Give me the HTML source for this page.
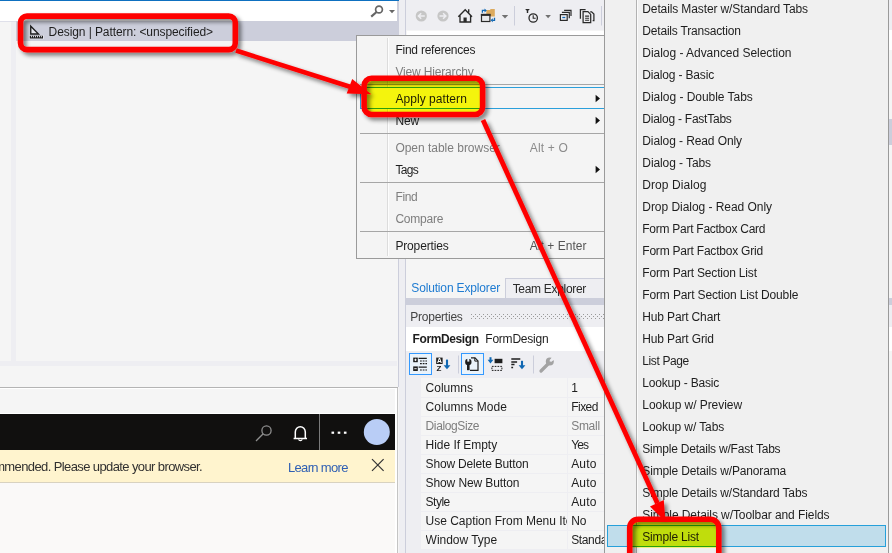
<!DOCTYPE html><html><head><meta charset="utf-8"><title>Apply pattern</title><style>
*{box-sizing:border-box}
html,body{margin:0;padding:0}
body{width:892px;height:553px;overflow:hidden;position:relative;background:#f5f5f5;font-family:"Liberation Sans",sans-serif;font-size:12px;color:#1e1e1e}
div,span,svg{position:absolute}
.t{white-space:pre;line-height:16px;height:16px}
.dis{color:#7e7e7e}
</style></head><body>
<div style="left:0;top:0;width:399px;height:1px;background:#0e70c0"></div>
<div style="left:0;top:1px;width:397px;height:20px;background:#fff"></div>
<div style="left:397px;top:1px;width:2px;height:40px;background:#cccedb"></div>
<div style="left:398px;top:41px;width:1px;height:346px;background:#cccedb"></div>
<div style="left:0;top:21px;width:17px;height:1px;background:#dfe0ea"></div>
<div style="left:16px;top:21px;width:383px;height:20px;background:#cccedb"></div>
<div style="left:11px;top:22px;width:5px;height:339px;background:#eeeef2"></div>
<div style="left:0;top:361px;width:397px;height:5px;background:#eeeef2"></div>
<svg style="left:368px;top:3px" width="30" height="17" viewBox="0 0 30 17"><circle cx="11" cy="6.5" r="3.4" fill="none" stroke="#666" stroke-width="1.7"/><path d="M8.6 9 L3.2 13.6" stroke="#666" stroke-width="2.2" fill="none"/><path d="M21 7 h6 l-3 3.2z" fill="#666"/></svg>
<svg style="left:28px;top:23px" width="17" height="17" viewBox="0 0 17 17"><rect x="1.2" y="12.1" width="14.4" height="4" fill="#e9e9f0"/><path d="M2.75 3.2 V11 H10.5 Z" fill="#e6e6ec" stroke="#1e1e1e" stroke-width="1.35" stroke-linejoin="miter"/><rect x="1.8" y="12.7" width="13.2" height="2.8" fill="#1e1e1e"/><path d="M3.5 12.7v1.6M5.5 12.7v1.6M7.5 12.7v1.6M9.5 12.7v1.6M11.5 12.7v1.6M13.4 12.7v1.6" stroke="#e9e9f0" stroke-width="0.9"/></svg>
<span class="t" style="left:48.6px;top:24px;letter-spacing:-0.091px;">Design | Pattern: &lt;unspecified&gt;</span>
<div style="left:0;top:387px;width:398px;height:1px;background:#b4b4b4"></div>
<div style="left:0;top:388px;width:397px;height:1px;background:#fff"></div>
<div style="left:397px;top:388px;width:1px;height:165px;background:#c4c4c4"></div>
<div style="left:395px;top:389px;width:2px;height:164px;background:#fff"></div>
<div style="left:0;top:413px;width:395px;height:1px;background:#fff"></div>
<div style="left:0;top:414px;width:395px;height:36px;background:#11100f"></div>
<div style="left:0;top:450px;width:395px;height:32px;background:#fff4ce"></div>
<div style="left:0;top:482px;width:395px;height:1px;background:#d8d2c0"></div>
<div style="left:0;top:483px;width:395px;height:70px;background:#faf9f8"></div>
<svg style="left:250px;top:416px" width="145" height="32" viewBox="0 0 145 32"><circle cx="16.5" cy="14.5" r="4.6" fill="none" stroke="#8f8f8f" stroke-width="1.3"/><path d="M13.2 17.8 L6 25" stroke="#8f8f8f" stroke-width="1.3"/><path d="M45.3 22.3 v-6.2 a5 5.4 0 0 1 10 0 v6.2 M43.6 22.6 h13.4" fill="none" stroke="#fff" stroke-width="1.5"/><path d="M48.6 23.4 a1.9 1.9 0 0 0 3.6 0" fill="none" stroke="#fff" stroke-width="1.3"/><rect x="81.5" y="15.6" width="2.6" height="2.2" fill="#fff"/><rect x="87.7" y="15.6" width="2.6" height="2.2" fill="#fff"/><rect x="93.9" y="15.6" width="2.6" height="2.2" fill="#fff"/><circle cx="126.8" cy="16" r="13" fill="#b9cdf6"/></svg>
<div style="left:319px;top:414px;width:1px;height:36px;background:#7a7a7a"></div>
<span class="t" style="left:-5.88px;top:459px;font-size:13px;color:#323130;letter-spacing:-0.607px">mmended. Please update your browser.</span>
<span class="t" style="left:288px;top:460px;font-size:13px;color:#2f5fb3;letter-spacing:-0.668px;">Learn more</span>
<svg style="left:370px;top:457px" width="16" height="16" viewBox="0 0 16 16"><path d="M2 2.2 L13.6 13.8 M13.6 2.2 L2 13.8" stroke="#333" stroke-width="1.2" fill="none"/></svg>
<div style="left:399px;top:0;width:6px;height:553px;background:#eeeef2"></div>
<div style="left:405px;top:0;width:1px;height:553px;background:#cccedb"></div>
<div style="left:406px;top:0;width:198px;height:30px;background:#eeeef2"></div>
<div style="left:406px;top:30px;width:198px;height:249px;background:#f5f5f5"></div>
<div style="left:407px;top:31px;width:197px;height:5px;background:#fff"></div>
<svg style="left:406px;top:0" width="198" height="30" viewBox="0 0 198 30"><circle cx="15.3" cy="16" r="5.6" fill="#c6c6c6"/><path d="M18.8 16 h-6 M15.2 13.2 l-2.8 2.8 2.8 2.8" stroke="#eeeef2" stroke-width="1.5" fill="none"/><circle cx="37" cy="16" r="5.6" fill="#c6c6c6"/><path d="M33.5 16 h6 M37.1 13.2 l2.8 2.8 -2.8 2.8" stroke="#eeeef2" stroke-width="1.5" fill="none"/><path d="M52.3 16.8 L59.2 9.7 L66 16.8 M54 15.4 V22 H64.6 V15.4 M62.7 12.4 V9.2" fill="none" stroke="#2a2a2a" stroke-width="1.35"/><rect x="57.5" y="17.5" width="3.2" height="4.6" fill="#2a2a2a"/><path d="M80.3 10 h3.6 l0.8-1 h4.1 v7.6 h-8.5z" fill="#dcaa5e"/><rect x="75.5" y="14.5" width="8.4" height="7" fill="#e9e9ec" stroke="#2a2a2a" stroke-width="1.2"/><rect x="74.9" y="13.9" width="9.6" height="2" fill="#2a2a2a"/><path d="M76.4 12.8 V10.4 H79" stroke="#1168b3" stroke-width="1.3" fill="none"/><path d="M78.5 8.4 L80.8 10.4 L78.5 12.4z" fill="#1168b3"/><path d="M88.5 17.8 V20.3 H86.4" stroke="#1168b3" stroke-width="1.3" fill="none"/><path d="M86.8 18.3 L84.5 20.3 L86.8 22.3z" fill="#1168b3"/><path d="M95.8 15 h6.4 l-3.2 3.4z" fill="#717171"/><path d="M108.5 6 v19.5" stroke="#cccedb" stroke-width="1"/><circle cx="127.2" cy="18" r="4.2" fill="none" stroke="#2a2a2a" stroke-width="1.3"/><path d="M127.2 15.2 v3 h2.5" fill="none" stroke="#2a2a2a" stroke-width="1.1"/><path d="M119.1 8.9 h4.8 l-1.7 1.9 v2.2 h-1.4 v-2.2z" fill="#2a2a2a"/><path d="M139.3 15 h5.6 l-2.8 3.2z" fill="#717171"/><path d="M158.1 10.3 H165 V16.1 M155.9 12.3 H163.3 V18.2" fill="none" stroke="#2a2a2a" stroke-width="1.2"/><rect x="154.4" y="14.6" width="6.8" height="5.8" fill="#eeeef2" stroke="#2a2a2a" stroke-width="1.2"/><path d="M156.3 17.5 h3" stroke="#1168b3" stroke-width="1.3"/><path d="M174.4 18.7 V9.6 H179.6 M184.2 11.9 H185.6 L187.9 14.1 V20.7 H186.7" fill="none" stroke="#2a2a2a" stroke-width="1.25"/><path d="M177.1 11.6 H181.9 L184.7 14.4 V22.7 H177.1Z" fill="#eeeef2" stroke="#2a2a2a" stroke-width="1.25"/><path d="M179.1 16.1 h4 M179.1 18.2 h4 M179.1 20.2 h4" stroke="#2a2a2a" stroke-width="1.1"/><path d="M195.5 6 v19.5" stroke="#cccedb" stroke-width="1"/></svg>
<div style="left:505px;top:278px;width:99px;height:20px;background:#eeeef2;border-left:1px solid #cccedb;border-top:1px solid #cccedb"></div>
<span class="t" style="left:411.3px;top:280px;color:#1e7bd1;letter-spacing:-0.158px;">Solution Explorer</span>
<span class="t" style="left:512.7px;top:281px;color:#2a2a2a;letter-spacing:-0.313px;">Team Explorer</span>
<div style="left:406px;top:298px;width:198px;height:7px;background:#cccedb"></div>
<div style="left:406px;top:305px;width:198px;height:22px;background:#eeeef2"></div>
<span class="t" style="left:410.3px;top:309px;color:#444;letter-spacing:-0.240px;">Properties</span>
<svg style="left:471px;top:314px" width="133" height="5" viewBox="0 0 133 5" shape-rendering="crispEdges"><defs><pattern id="grip" width="4" height="4" patternUnits="userSpaceOnUse"><rect x="0" y="0" width="1" height="1" fill="#999"/><rect x="2" y="2" width="1" height="1" fill="#999"/></pattern></defs><rect width="133" height="5" fill="url(#grip)"/></svg>
<div style="left:406px;top:327px;width:198px;height:24px;background:#fff"></div>
<span class="t" style="left:412.5px;top:331px;font-weight:700;letter-spacing:-0.392px;">FormDesign</span>
<span class="t" style="left:485.3px;top:331px;letter-spacing:-0.226px;">FormDesign</span>
<div style="left:406px;top:351px;width:198px;height:27px;background:#eeeef2"></div>
<div style="left:409px;top:353px;width:23px;height:22px;background:#eaf3fb;border:1px solid #3399ff"></div>
<div style="left:461px;top:353px;width:23px;height:22px;background:#eaf3fb;border:1px solid #3399ff"></div>
<svg style="left:406px;top:351px" width="198" height="27" viewBox="0 0 198 27"><rect x="7.2" y="6.6" width="4.6" height="4.6" fill="#1e1e1e"/><path d="M8.3 8.9h2.4M9.5 7.7v2.4" stroke="#fff" stroke-width="0.9"/><rect x="7.2" y="15.4" width="4.6" height="4.6" fill="#1e1e1e"/><path d="M8.3 17.7h2.4" stroke="#fff" stroke-width="0.9"/><path d="M12.6 7.4h8.2M12.6 16.2h8.2" stroke="#1e1e1e" stroke-width="1.3"/><path d="M14 10h7M14 12.6h7M14 19h7" stroke="#1e1e1e" stroke-width="1.2" stroke-dasharray="1.8 0.9"/><rect x="30.2" y="6.6" width="6.4" height="6.4" fill="#1e1e1e"/><text x="31.1" y="12.3" font-family="Liberation Sans,sans-serif" font-size="6.8" font-weight="700" fill="#fff">A</text><text x="30.6" y="20.2" font-family="Liberation Sans,sans-serif" font-size="8" font-weight="700" fill="#1e1e1e">Z</text><path d="M41 8.6v8.2" stroke="#1168b3" stroke-width="2.1" fill="none"/><path d="M37.6 14.2h6.8l-3.4 4z" fill="#1168b3"/><path d="M52.5 4.5v18" stroke="#cccedb"/><path d="M65 6.9 h4 l3 3 v9.4 h-8" fill="none" stroke="#1e1e1e" stroke-width="1.2"/><path d="M68.8 6.9 v3.2 h3.2" fill="none" stroke="#1e1e1e" stroke-width="1"/><circle cx="62.3" cy="10.9" r="3.2" fill="#1e1e1e"/><rect x="61.3" y="7" width="2" height="3.6" fill="#eaf3fb"/><rect x="61" y="12" width="2.6" height="7.2" fill="#1e1e1e"/><path d="M84.5 6.2v4" stroke="#1168b3" stroke-width="2" fill="none"/><path d="M81.6 8.8h5.8l-2.9 3.6z" fill="#1168b3"/><rect x="88.6" y="7.8" width="7.8" height="4.4" fill="#1e1e1e"/><rect x="85.9" y="15.4" width="10" height="4" fill="none" stroke="#1e1e1e" stroke-width="1" stroke-dasharray="1.7 1.1"/><path d="M105.3 8.1h9M105.3 11h5.8M105.3 13.6h3.2M105.3 16.4h1.8" stroke="#1e1e1e" stroke-width="1.5"/><path d="M116 9.8v7" stroke="#1168b3" stroke-width="2.1" fill="none"/><path d="M112.6 14.2h6.8l-3.4 4z" fill="#1168b3"/><path d="M127.5 4.5v18" stroke="#cccedb"/><path d="M135 20 L142 13" stroke="#a3a3a3" stroke-width="3.2" stroke-linecap="round" fill="none"/><circle cx="143.8" cy="10.6" r="4" fill="#a3a3a3"/><path d="M143.6 10.8 L146.2 5.6 L149.4 8.6 Z" fill="#eeeef2"/><path d="M144.3 10.1 L147.6 6.8" stroke="#eeeef2" stroke-width="2.4"/></svg>
<div style="left:406px;top:378px;width:198px;height:175px;background:#eeeef2"></div>
<div style="left:421px;top:378px;width:183px;height:171px;background:#f5f5f5"></div>
<div style="left:567px;top:378px;width:1px;height:171px;background:#eeeef2"></div>
<div style="left:421px;top:397px;width:183px;height:1px;background:#eeeef2"></div>
<span class="t" style="left:425.6px;top:380px;letter-spacing:0.006px;width:141.4px;overflow:hidden;">Columns</span>
<span class="t" style="left:571.2px;top:380px;letter-spacing:-1.388px;width:32.8px;overflow:hidden;">1</span>
<div style="left:421px;top:416px;width:183px;height:1px;background:#eeeef2"></div>
<span class="t" style="left:425.6px;top:399px;letter-spacing:0.058px;width:141.4px;overflow:hidden;">Columns Mode</span>
<span class="t" style="left:571.2px;top:399px;letter-spacing:-0.529px;width:32.8px;overflow:hidden;">Fixed</span>
<div style="left:421px;top:435px;width:183px;height:1px;background:#eeeef2"></div>
<span class="t dis" style="left:425.6px;top:418px;letter-spacing:-0.388px;width:141.4px;overflow:hidden;">DialogSize</span>
<span class="t dis" style="left:571.2px;top:418px;letter-spacing:-0.283px;width:32.8px;overflow:hidden;">Small</span>
<div style="left:421px;top:454px;width:183px;height:1px;background:#eeeef2"></div>
<span class="t" style="left:425.6px;top:437px;letter-spacing:-0.041px;width:141.4px;overflow:hidden;">Hide If Empty</span>
<span class="t" style="left:571.2px;top:437px;letter-spacing:-0.926px;width:32.8px;overflow:hidden;">Yes</span>
<div style="left:421px;top:473px;width:183px;height:1px;background:#eeeef2"></div>
<span class="t" style="left:425.6px;top:456px;letter-spacing:-0.182px;width:141.4px;overflow:hidden;">Show Delete Button</span>
<span class="t" style="left:571.2px;top:456px;letter-spacing:0.153px;width:32.8px;overflow:hidden;">Auto</span>
<div style="left:421px;top:492px;width:183px;height:1px;background:#eeeef2"></div>
<span class="t" style="left:425.6px;top:475px;letter-spacing:-0.113px;width:141.4px;overflow:hidden;">Show New Button</span>
<span class="t" style="left:571.2px;top:475px;letter-spacing:0.153px;width:32.8px;overflow:hidden;">Auto</span>
<div style="left:421px;top:511px;width:183px;height:1px;background:#eeeef2"></div>
<span class="t" style="left:425.6px;top:494px;letter-spacing:-0.498px;width:141.4px;overflow:hidden;">Style</span>
<span class="t" style="left:571.2px;top:494px;letter-spacing:0.153px;width:32.8px;overflow:hidden;">Auto</span>
<div style="left:421px;top:530px;width:183px;height:1px;background:#eeeef2"></div>
<span class="t" style="left:425.6px;top:513px;letter-spacing:-0.019px;width:141.4px;overflow:hidden;">Use Caption From Menu Item</span>
<span class="t" style="left:571.2px;top:513px;letter-spacing:-0.022px;width:32.8px;overflow:hidden;">No</span>
<div style="left:421px;top:549px;width:183px;height:1px;background:#eeeef2"></div>
<span class="t" style="left:425.6px;top:532px;letter-spacing:-0.028px;width:141.4px;overflow:hidden;">Window Type</span>
<span class="t" style="left:571.2px;top:532px;letter-spacing:-0.363px;width:32.8px;overflow:hidden;">Standard</span>
<div style="left:604px;top:0;width:288px;height:553px;background:#eeeef2"></div>
<div style="left:889px;top:0;width:3px;height:553px;background:#f5f5f5"></div>
<div style="left:889px;top:0;width:3px;height:30px;background:#eeeef2"></div>
<div style="left:889px;top:30px;width:3px;height:20px;background:#fff"></div>
<div style="left:889px;top:119px;width:3px;height:26px;background:#cccedb"></div>
<div style="left:889px;top:298px;width:3px;height:7px;background:#cccedb"></div>
<div style="left:889px;top:305px;width:3px;height:22px;background:#eeeef2"></div>
<div style="left:889px;top:327px;width:3px;height:24px;background:#fff"></div>
<div style="left:356px;top:35px;width:249px;height:224px;background:#f4f4f4;border:1px solid #9a9a9a"></div>
<div style="left:387px;top:38px;width:1px;height:218px;background:#dcdcdc"></div>
<div style="left:388px;top:38px;width:1px;height:218px;background:#fdfdfd"></div>
<div style="left:360px;top:84px;width:244px;height:1px;background:#a6a6a6"></div>
<div style="left:360px;top:133px;width:244px;height:1px;background:#a6a6a6"></div>
<div style="left:360px;top:182px;width:244px;height:1px;background:#a6a6a6"></div>
<div style="left:360px;top:231px;width:244px;height:1px;background:#a6a6a6"></div>
<div style="left:360px;top:87px;width:244px;height:22px;background:#f4f4f4;border-top:1px solid #2b9fdb;border-bottom:1px solid #2b9fdb;border-left:1px solid #2b9fdb"></div>
<span class="t" style="left:395.4px;top:42px;letter-spacing:-0.232px;">Find references</span>
<span class="t dis" style="left:395.4px;top:64px;letter-spacing:-0.163px;">View Hierarchy</span>
<span class="t" style="left:395.4px;top:91px;letter-spacing:0.060px;">Apply pattern</span>
<svg style="left:595px;top:94px" width="6" height="9" viewBox="0 0 6 9"><path d="M0.6 0.8 L5 4.5 L0.6 8.2z" fill="#111"/></svg>
<span class="t" style="left:395.4px;top:113px;letter-spacing:-0.139px;">New</span>
<svg style="left:595px;top:116px" width="6" height="9" viewBox="0 0 6 9"><path d="M0.6 0.8 L5 4.5 L0.6 8.2z" fill="#111"/></svg>
<span class="t dis" style="left:395.4px;top:140px;letter-spacing:-0.019px;">Open table browser</span>
<span class="t" style="left:529.8px;top:140px;color:#8c8c8c;letter-spacing:0.169px;">Alt + O</span>
<span class="t" style="left:395.4px;top:162px;letter-spacing:-0.690px;">Tags</span>
<svg style="left:595px;top:165px" width="6" height="9" viewBox="0 0 6 9"><path d="M0.6 0.8 L5 4.5 L0.6 8.2z" fill="#111"/></svg>
<span class="t dis" style="left:395.4px;top:189px;letter-spacing:-0.336px;">Find</span>
<span class="t dis" style="left:395.4px;top:211px;letter-spacing:-0.208px;">Compare</span>
<span class="t" style="left:395.4px;top:238px;letter-spacing:-0.150px;">Properties</span>
<span class="t" style="left:529.8px;top:238px;color:#555;letter-spacing:0.030px;">Alt + Enter</span>
<div style="left:604px;top:-2px;width:285px;height:560px;background:#f0f0f0;border:1px solid #9a9a9a"></div>
<div style="left:636px;top:0;width:1px;height:553px;background:#b2b2b2"></div>
<div style="left:637px;top:0;width:1px;height:553px;background:#fbfbfb"></div>
<div style="left:607px;top:525px;width:279px;height:22px;background:#c0ddeb;border:1px solid #26a0da"></div>
<span class="t" style="left:642.3px;top:1px;letter-spacing:-0.117px;">Details Master w/Standard Tabs</span>
<span class="t" style="left:642.3px;top:23px;letter-spacing:-0.192px;">Details Transaction</span>
<span class="t" style="left:642.3px;top:45px;letter-spacing:-0.033px;">Dialog - Advanced Selection</span>
<span class="t" style="left:642.3px;top:67px;letter-spacing:-0.167px;">Dialog - Basic</span>
<span class="t" style="left:642.3px;top:89px;letter-spacing:-0.034px;">Dialog - Double Tabs</span>
<span class="t" style="left:642.3px;top:111px;letter-spacing:-0.240px;">Dialog - FastTabs</span>
<span class="t" style="left:642.3px;top:133px;letter-spacing:-0.094px;">Dialog - Read Only</span>
<span class="t" style="left:642.3px;top:155px;letter-spacing:-0.087px;">Dialog - Tabs</span>
<span class="t" style="left:642.3px;top:177px;letter-spacing:0.066px;">Drop Dialog</span>
<span class="t" style="left:642.3px;top:199px;letter-spacing:-0.045px;">Drop Dialog - Read Only</span>
<span class="t" style="left:642.3px;top:221px;letter-spacing:-0.264px;">Form Part Factbox Card</span>
<span class="t" style="left:642.3px;top:243px;letter-spacing:-0.217px;">Form Part Factbox Grid</span>
<span class="t" style="left:642.3px;top:265px;letter-spacing:-0.192px;">Form Part Section List</span>
<span class="t" style="left:642.3px;top:287px;letter-spacing:-0.144px;">Form Part Section List Double</span>
<span class="t" style="left:642.3px;top:309px;letter-spacing:-0.153px;">Hub Part Chart</span>
<span class="t" style="left:642.3px;top:331px;letter-spacing:-0.143px;">Hub Part Grid</span>
<span class="t" style="left:642.3px;top:353px;letter-spacing:-0.383px;">List Page</span>
<span class="t" style="left:642.3px;top:375px;letter-spacing:-0.185px;">Lookup - Basic</span>
<span class="t" style="left:642.3px;top:397px;letter-spacing:-0.060px;">Lookup w/ Preview</span>
<span class="t" style="left:642.3px;top:419px;letter-spacing:-0.091px;">Lookup w/ Tabs</span>
<span class="t" style="left:642.3px;top:441px;letter-spacing:-0.221px;">Simple Details w/Fast Tabs</span>
<span class="t" style="left:642.3px;top:463px;letter-spacing:-0.144px;">Simple Details w/Panorama</span>
<span class="t" style="left:642.3px;top:485px;letter-spacing:-0.140px;">Simple Details w/Standard Tabs</span>
<span class="t" style="left:642.3px;top:507px;letter-spacing:-0.083px;">Simple Details w/Toolbar and Fields</span>
<span class="t" style="left:642.3px;top:529px;letter-spacing:-0.181px;">Simple List</span>
<svg style="left:0;top:0" width="892" height="553" viewBox="0 0 892 553"><defs><filter id="sh" x="-10%" y="-10%" width="130%" height="130%"><feGaussianBlur in="SourceAlpha" stdDeviation="2.1"/><feOffset dx="3" dy="3"/><feComponentTransfer><feFuncA type="linear" slope="0.5"/></feComponentTransfer><feMerge><feMergeNode/><feMergeNode in="SourceGraphic"/></feMerge></filter></defs><rect x="366" y="80" width="115" height="33" fill="#ffff00" fill-opacity="0.95" style="mix-blend-mode:multiply"/><rect x="632" y="522" width="85" height="25.5" fill="#ffff00" fill-opacity="0.95" style="mix-blend-mode:multiply"/><g filter="url(#sh)" fill="none" stroke="#fe0000" stroke-width="5.6"><rect x="20.5" y="16.1" width="214.8" height="33.5" rx="6.5"/><rect x="364.1" y="78.3" width="118.5" height="36.2" rx="7.5"/><rect x="629.7" y="519.3" width="89.1" height="44" rx="8.5"/><path d="M236 50.5 L350 86.8" stroke-width="4.6"/><path d="M483 120 L657.4 503.2" stroke-width="4.8"/><path d="M371.3 94.2 L346.7 93.6 L352.2 79z" fill="#fe0000" stroke="none"/><path d="M665.4 521.6 L650 506.4 L663.8 500z" fill="#fe0000" stroke="none"/></g></svg>
</body></html>
